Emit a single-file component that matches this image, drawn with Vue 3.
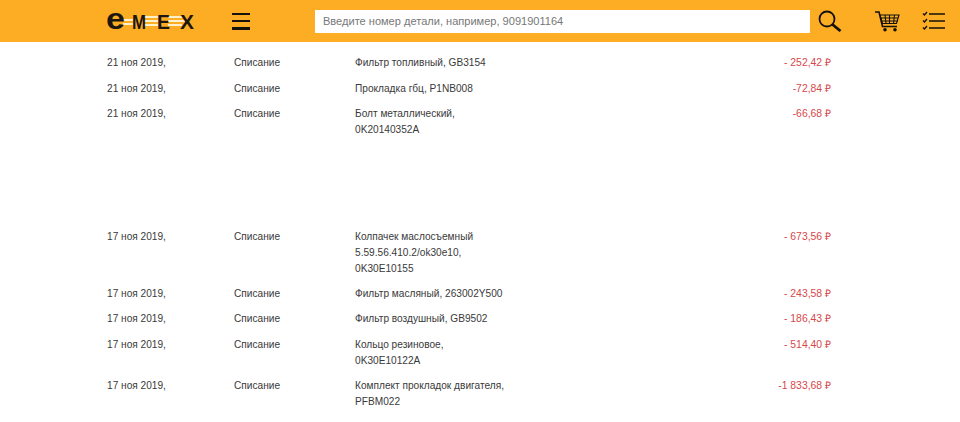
<template>
  <div class="page">
    <header class="topbar">
      <a class="logo" aria-label="emex">
        <svg width="88" height="34" viewBox="0 0 88 34">
          <g class="stripes">
            <rect x="17" y="15" width="10" height="2" />
            <rect x="17" y="19" width="10" height="2" />
            <rect x="38" y="12" width="14" height="2" />
            <rect x="38" y="16" width="14" height="2" />
            <rect x="38" y="20" width="14" height="2" />
            <rect x="62" y="12" width="14" height="2" />
            <rect x="62" y="16" width="17" height="2" />
            <rect x="62" y="20" width="14" height="2" />
          </g>
          <text x="0" y="25" class="logo-e" textLength="19" lengthAdjust="spacingAndGlyphs">e</text>
          <text x="26" y="25" class="logo-l" textLength="14" lengthAdjust="spacingAndGlyphs">M</text>
          <text x="51" y="25" class="logo-l" textLength="13" lengthAdjust="spacingAndGlyphs">E</text>
          <text x="74" y="25" class="logo-l" textLength="14" lengthAdjust="spacingAndGlyphs">X</text>
        </svg>
      </a>
      <button class="burger" aria-label="Меню">
        <span></span><span></span><span></span>
      </button>
      <div class="search">Введите номер детали, например, 9091901164</div>
      <svg class="ic-search" width="24" height="22" viewBox="0 0 24 22" fill="none" stroke="#15120c">
        <circle cx="9" cy="9" r="7.500" stroke-width="1.800" />
        <path d="M14.500 14.500 22.500 21" stroke-width="2.800" />
      </svg>
      <svg class="ic-cart" width="25" height="21" viewBox="0 0 25 21" fill="none" stroke="#15120c">
        <path d="M0 1h4l3.500 14.500h14.500" stroke-width="1.600" />
        <path d="M5 4h19l-2.500 8.500H7.500zM10 4l1 8.500M14.500 4v8.500M19.500 4l-1 8.500M6 7h17.500M7 10h16" stroke-width="1.100" />
        <circle cx="10" cy="18.800" r="1.800" fill="#15120c" stroke="none" />
        <circle cx="20" cy="18.800" r="1.800" fill="#15120c" stroke="none" />
      </svg>
      <svg class="ic-list" width="23" height="20" viewBox="0 0 23 20" fill="none" stroke="#15120c">
        <path d="M7 3h16M7 10h16M7 17h16" stroke-width="1.500" />
        <path d="M1 2.500 2.500 4 5 1M1 9.500 2.500 11 5 8M1 16.500 2.500 18 5 15" stroke-width="1.400" />
      </svg>
    </header>

    <section v-for="(group, g) in groups" :key="g" class="group">
      <div v-for="(row, i) in group" :key="i" class="row">
        <div>{{ row.date }}</div>
        <div>Списание</div>
        <div class="name">
          <div v-for="line in row.name" :key="line">{{ line }}</div>
        </div>
        <div class="sum">{{ row.sum }} ₽</div>
      </div>
    </section>
  </div>
</template>

<script setup>
const groups = [
  [
    { date: '21 ноя 2019,', name: ['Фильтр топливный, GB3154'], sum: '- 252,42' },
    { date: '21 ноя 2019,', name: ['Прокладка гбц, P1NB008'], sum: '-72,84' },
    { date: '21 ноя 2019,', name: ['Болт металлический,', '0K20140352A'], sum: '-66,68' },
  ],
  [
    { date: '17 ноя 2019,', name: ['Колпачек маслосъемный', '5.59.56.410.2/ok30e10,', '0K30E10155'], sum: '- 673,56' },
    { date: '17 ноя 2019,', name: ['Фильтр масляный, 263002Y500'], sum: '- 243,58' },
    { date: '17 ноя 2019,', name: ['Фильтр воздушный, GB9502'], sum: '- 186,43' },
    { date: '17 ноя 2019,', name: ['Кольцо резиновое,', '0K30E10122A'], sum: '- 514,40' },
    { date: '17 ноя 2019,', name: ['Комплект прокладок двигателя,', 'PFBM022'], sum: '-1 833,68' },
  ],
]
</script>

<style>
html, body {
  background: #fff;
  overflow: hidden;
}
</style>

<style scoped>
.page {
  height: 422px;
  overflow: hidden;
  font-family: "Liberation Sans", Arial, sans-serif;
  font-size: 10.15px;
  line-height: 16px;
  color: #3a3a3a;
}

.topbar {
  height: 42px;
  background: #fdad23;
  display: flex;
  align-items: center;
  padding-left: 106px;
}

.logo {
  display: block;
  height: 34px;
  margin-right: 38px;
}
.logo svg {
  display: block;
}
.logo-e {
  font: 700 29px "Liberation Sans", sans-serif;
  fill: #1d1710;
}
.logo-l {
  font: 700 20px "Liberation Sans", sans-serif;
  fill: #1d1710;
}
.stripes {
  fill: #fff0cc;
}

.burger {
  width: 18px;
  height: 17px;
  padding: 0;
  border: 0;
  background: none;
  display: flex;
  flex-direction: column;
  justify-content: space-between;
  margin-right: 65px;
}
.burger span {
  display: block;
  height: 2.500px;
  background: #15120c;
}

.search {
  width: 495px;
  height: 23px;
  box-sizing: border-box;
  background: #fff;
  color: #777;
  font-size: 11.05px;
  line-height: 23px;
  padding-left: 8px;
  margin-right: 8px;
}

.ic-search {
  margin-right: 33px;
}
.ic-cart {
  margin-right: 22px;
}

.group {
  padding-left: 107px;
  padding-right: 129px;
}
.group:first-of-type {
  padding-top: 13.200px;
  padding-bottom: 81.200px;
}

.row {
  display: grid;
  grid-template-columns: 127px 121px 1fr auto;
  padding-bottom: 9.400px;
}

.sum {
  color: #d6474a;
  font-size: 10.4px;
  text-align: right;
}
</style>
